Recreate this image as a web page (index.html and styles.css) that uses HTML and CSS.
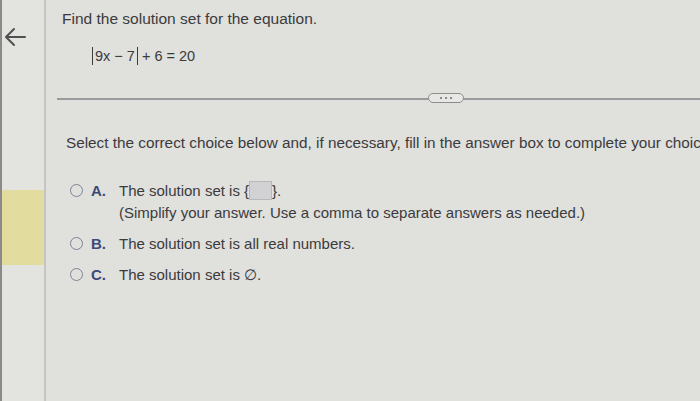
FILE: index.html
```html
<!DOCTYPE html>
<html>
<head>
<meta charset="utf-8">
<link rel="stylesheet" href="styles.css">
</head>
<body>
<div class="page">
  <aside class="side">
    <div class="back">
      <svg width="24" height="20" viewBox="0 0 24 20"><path d="M22 10H3M11 2L3 10L11 18" fill="none" stroke="#505050" stroke-width="2" stroke-linecap="round" stroke-linejoin="round"/></svg>
    </div>
    <div class="mark"></div>
  </aside>
  <main class="main">
    <section class="question">
      <p class="title">Find the solution set for the equation.</p>
      <p class="eq"><span class="abs">9x − 7</span> + 6 = 20</p>
    </section>
    <div class="rule"><span class="pill"><i></i><i></i><i></i></span></div>
    <p class="prompt">Select the correct choice below and, if necessary, fill in the answer box to complete your choice.</p>
    <ul class="choices">
      <li class="choice">
        <span class="radio"></span><span class="letter">A.</span>
        <div class="ctext">
          <div>The solution set is <span class="brace">{</span><span class="box"></span><span class="brace">}</span>.</div>
          <div>(Simplify your answer. Use a comma to separate answers as needed.)</div>
        </div>
      </li>
      <li class="choice">
        <span class="radio"></span><span class="letter">B.</span>
        <div class="ctext">The solution set is all real numbers.</div>
      </li>
      <li class="choice">
        <span class="radio"></span><span class="letter">C.</span>
        <div class="ctext">The solution set is ∅.</div>
      </li>
    </ul>
  </main>
</div>
</body>
</html>
```

FILE: styles.css
```css
html, body {
  margin: 0;
  padding: 0;
}
body {
  width: 700px;
  height: 401px;
  overflow: hidden;
  background: #e0e0dc;
  font-family: "Liberation Sans", Arial, sans-serif;
  color: #3b3b3d;
}
.page {
  display: flex;
  height: 401px;
}
.side {
  width: 42px;
  flex: none;
  border-left: 2px solid #8a8a88;
  border-right: 2px solid #c4c4c2;
  background: #e3e3df;
  display: flex;
  flex-direction: column;
}
.back {
  padding: 27px 0 0 1px;
  height: 22px;
}
.mark {
  margin-top: 141px;
  height: 75px;
  background: #e3dc9f;
}
.main {
  flex: 1;
  min-width: 0;
  padding-top: 10px;
  white-space: nowrap;
}
p { margin: 0; }
.question {
  padding-left: 16px;
}
.title {
  font-size: 15.5px;
  line-height: 18px;
}
.eq {
  margin-top: 19px;
  padding-left: 30px;
  font-size: 14.5px;
  line-height: 18px;
}
.abs {
  border-left: 1.5px solid #3b3b3d;
  border-right: 1.5px solid #3b3b3d;
  padding: 1px 2px;
}
.rule {
  margin: 33px 0 0 11px;
  height: 2px;
  background: #9a9a9c;
  position: relative;
}
.pill {
  position: absolute;
  left: 371px;
  top: -5px;
  width: 34px;
  height: 8px;
  border: 1.5px solid #8d8d90;
  border-radius: 6px;
  background: #e7e7e4;
  display: flex;
  justify-content: center;
  align-items: center;
  gap: 3px;
}
.pill i {
  width: 2px;
  height: 2px;
  border-radius: 50%;
  background: #6b6b78;
}
.prompt {
  margin: 34px 0 0 20px;
  font-size: 15.3px;
  line-height: 18px;
}
.choices {
  list-style: none;
  margin: 28px 0 0 24px;
  padding: 0;
  font-size: 15px;
  line-height: 22px;
}
.choice {
  display: flex;
  align-items: flex-start;
  margin-bottom: 9px;
}
.radio {
  width: 11px;
  height: 11px;
  border: 1.5px solid #7d8396;
  border-radius: 50%;
  margin-top: 4px;
  flex: none;
}
.letter {
  width: 28px;
  padding-left: 8px;
  font-weight: bold;
  color: #3c4a78;
  flex: none;
}
.brace {
  font-size: 15px;
}
.box {
  display: inline-block;
  width: 21px;
  height: 17px;
  background: #d2d2d4;
  border: 1px solid #b8b8bc;
  vertical-align: -4px;
}
```
